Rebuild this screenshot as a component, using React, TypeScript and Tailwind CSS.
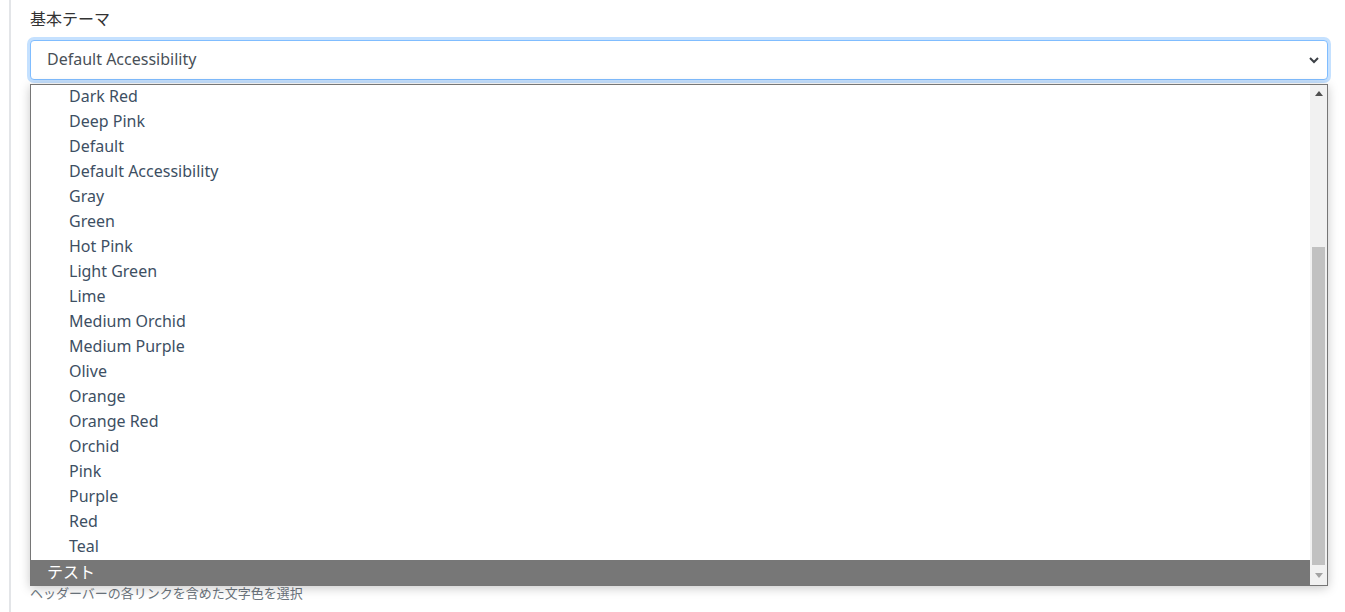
const themes = [
  "Dark Red",
  "Deep Pink",
  "Default",
  "Default Accessibility",
  "Gray",
  "Green",
  "Hot Pink",
  "Light Green",
  "Lime",
  "Medium Orchid",
  "Medium Purple",
  "Olive",
  "Orange",
  "Orange Red",
  "Orchid",
  "Pink",
  "Purple",
  "Red",
  "Teal",
];

export default function App() {
  return (
    <div
      className="w-[1345px] h-[612px] overflow-hidden bg-white flex"
      style={{ fontFamily: '"Noto Sans", "Noto Sans CJK JP", sans-serif' }}
    >
      {/* left rule */}
      <div className="w-[9px] shrink-0" />
      <div className="w-[2px] shrink-0 bg-[#e3e5e8]" />

      <div className="flex-1 pl-[19px] pr-[17px] pt-[7px]">
        <div className="text-[16px] leading-[24px] text-[#333]">基本テーマ</div>

        {/* select box */}
        <div className="mt-[9px] h-[40px] rounded-[4px] border border-[#80bdff] ring-[3px] ring-[#c5e1ff] flex items-center pl-[16px] pr-[8px] pb-[2px] text-[16px] text-[#495057] bg-white">
          <span className="flex-1">Default Accessibility</span>
          <svg width="10" height="8" viewBox="0 0 10 8" className="mt-[2px]">
            <path d="M1 2 L5 6 L9 2" fill="none" stroke="#3c4046" strokeWidth="2" />
          </svg>
        </div>

        {/* dropdown with helper text underneath */}
        <div className="relative mt-[4px]">
          <div className="text-[13px] text-[#6c757d] pt-[501px] leading-[16px]">
            ヘッダーバーの各リンクを含めた文字色を選択
          </div>
          <div className="absolute left-0 right-0 top-0 h-[502px] border border-[#767676] bg-white shadow-[0_2px_10px_rgba(0,0,0,0.22)] flex">
            <div className="flex-1 flex flex-col">
              {themes.map((t) => (
                <div
                  key={t}
                  className="h-[25px] shrink-0 flex items-center pl-[38px] pb-[3px] text-[16px] leading-[20px] text-[#3d4f63]"
                >
                  {t}
                </div>
              ))}
              <div className="h-[25px] shrink-0 flex items-center pl-[16px] pb-[2px] text-[16px] leading-[20px] text-white bg-[#777777]">
                テスト
              </div>
            </div>

            {/* scrollbar */}
            <div className="w-[17px] bg-[#f1f1f1] flex flex-col items-center">
              <div className="h-[17px] flex items-center justify-center">
                <svg width="8" height="5" viewBox="0 0 8 5">
                  <path d="M0 5 L4 0 L8 5 Z" fill="#505050" />
                </svg>
              </div>
              <div className="h-[145px]" />
              <div className="w-[13px] h-[318px] bg-[#c1c1c1]" />
              <div className="flex-1 flex items-center justify-center">
                <svg width="8" height="5" viewBox="0 0 8 5">
                  <path d="M0 0 L8 0 L4 5 Z" fill="#a3a3a3" />
                </svg>
              </div>
            </div>
          </div>
        </div>
      </div>
    </div>
  );
}
